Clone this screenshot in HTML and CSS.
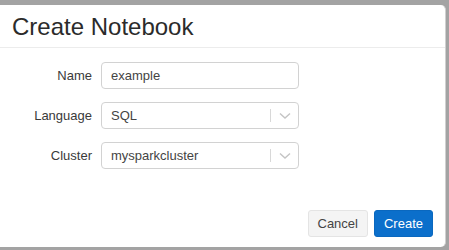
FILE: index.html
```html
<!DOCTYPE html>
<html lang="en">
<head>
    <meta charset="UTF-8">
    <meta name="viewport" content="width=device-width, initial-scale=1.0">
    <title>Create Notebook</title>
    <link rel="stylesheet" href="styles.css">
</head>
<body>
    <div class="modal">
        <div class="modal-header">
            <h1>Create Notebook</h1>
        </div>

        <div class="modal-body">
            <div class="form-row">
                <label for="nbName">Name</label>
                <input type="text" id="nbName" class="field" value="example">
            </div>

            <div class="form-row">
                <label>Language</label>
                <div class="field select">
                    <span class="value">SQL</span>
                    <span class="sep"></span>
                    <svg class="chev" width="12" height="8" viewBox="0 0 12 8"><path d="M1 1.5 L6 6 L11 1.5" fill="none" stroke="#c4c4c4" stroke-width="1.4"/></svg>
                </div>
            </div>

            <div class="form-row">
                <label>Cluster</label>
                <div class="field select">
                    <span class="value">mysparkcluster</span>
                    <span class="sep"></span>
                    <svg class="chev" width="12" height="8" viewBox="0 0 12 8"><path d="M1 1.5 L6 6 L11 1.5" fill="none" stroke="#c4c4c4" stroke-width="1.4"/></svg>
                </div>
            </div>
        </div>

        <div class="modal-footer">
            <button class="btn btn-default">Cancel</button>
            <button class="btn btn-primary">Create</button>
        </div>
    </div>
</body>
</html>
```

FILE: styles.css
```css
body {
    margin: 0;
    background: #a3a3a3;
    font-family: "Liberation Sans", Arial, sans-serif;
    height: 250px;
    overflow: hidden;
}
.modal {
    margin-top: 5px;
    width: 445px;
    height: 242px;
    background: #fff;
    border-right: 1px solid #d0d0d0;
    border-radius: 0 5px 5px 0;
    display: flex;
    flex-direction: column;
}
.modal-header {
    height: 42px;
    border-bottom: 1px solid #ececec;
    padding-left: 12px;
}
.modal-header h1 {
    margin: 0;
    padding-top: 8px;
    font-size: 24px;
    font-weight: normal;
    color: #2b2b2b;
    line-height: 28px;
}
.modal-body {
    padding-top: 14px;
    display: flex;
    flex-direction: column;
    gap: 13px;
}
.form-row {
    display: flex;
    align-items: center;
}
.form-row label {
    width: 92px;
    text-align: right;
    font-size: 13px;
    color: #3a3a3a;
    margin-right: 9px;
}
.field {
    box-sizing: border-box;
    width: 198px;
    height: 27px;
    border: 1px solid #d2d2d2;
    border-radius: 4px;
    font-family: "Liberation Sans", Arial, sans-serif;
    font-size: 13px;
    color: #444;
    padding: 0 9px;
    margin: 0;
    outline: none;
}
.select {
    display: flex;
    align-items: center;
    padding-right: 7px;
}
.select .value {
    flex: 1;
}
.select .sep {
    width: 1px;
    height: 13px;
    background: #d8d8d8;
    margin-right: 8px;
}
.modal-footer {
    margin-top: auto;
    padding: 0 12px 10px 0;
    display: flex;
    justify-content: flex-end;
    gap: 6px;
}
.btn {
    height: 27px;
    border-radius: 3px;
    font-family: "Liberation Sans", Arial, sans-serif;
    font-size: 13px;
    padding: 0 9px;
    cursor: pointer;
}
.btn-default {
    background: #f4f4f4;
    border: 1px solid #e4e4e4;
    color: #444;
}
.btn-primary {
    background: #0b6fcb;
    border: 1px solid #0a68bf;
    color: #fff;
}
```
